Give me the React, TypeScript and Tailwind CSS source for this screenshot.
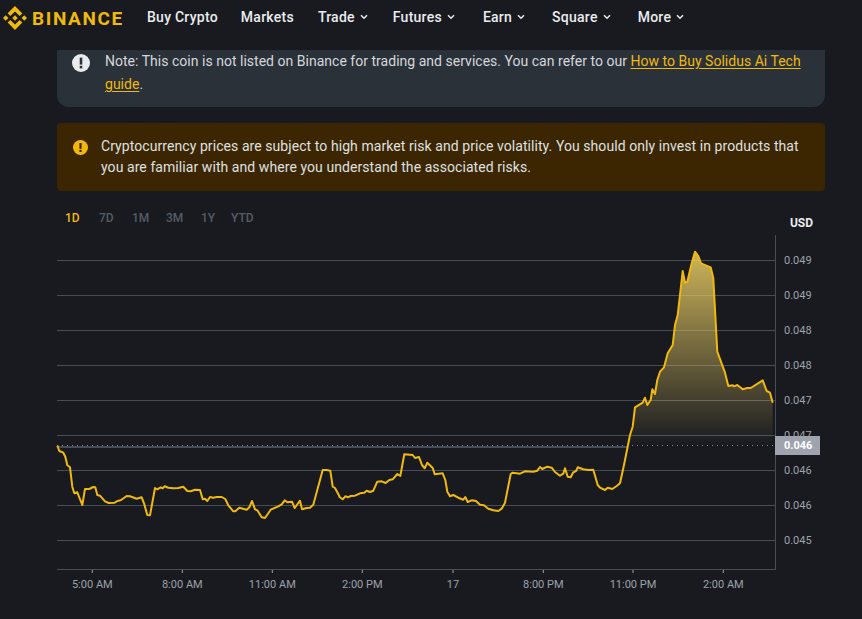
import React from "react";

// price line traced from the chart, kept per crop: [x, y] in 3x pixels with an offset
type Pt = [number, number];
const trace = (pts: Pt[], ox: number, oy: number): Pt[] => pts.map(([x, y]) => [ox + x / 3, oy + y / 3]);

const morning = trace(
  [[52,47],[58,63],[70,68],[76,80],[82,106],[90,112],[97,170],[103,190],[112,187],[127,225],[135,177],[148,177],[160,171],[166,172],[172,195],[180,197],[195,214],[206,219],[224,218],[232,213],[242,211],[260,198],[270,199],[290,206],[305,202],[312,220],[322,255],[330,256],[345,174],[352,178],[362,172],[368,175],[374,169],[385,173],[400,175],[415,174],[430,170],[442,183],[452,184],[465,179],[480,180],[488,208],[495,206],[502,213],[510,201],[520,203],[530,201],[545,201],[556,207],[565,226],[580,244],[586,244],[598,233],[620,239],[628,232],[636,213],[645,238],[652,241],[665,262],[675,264],[692,239],[715,229],[725,223],[734,211],[742,217],[756,215],[764,234],[780,212],[786,238],[800,234],[810,233],[820,224],[848,120],[860,120],[871,122],[878,170],[885,174],[898,198]],
  40, 430,
);
const afternoon = trace(
  [[58,200],[68,208],[76,199],[84,202],[92,198],[105,197],[120,190],[133,188],[140,182],[150,186],[160,182],[172,155],[185,154],[197,159],[208,150],[218,148],[232,132],[241,138],[253,73],[278,75],[285,84],[297,81],[306,105],[314,115],[322,98],[338,114],[344,133],[368,130],[376,150],[382,185],[390,199],[400,195],[415,203],[430,209],[436,201],[443,216],[455,211],[468,213],[480,224],[492,226],[505,236],[520,241],[535,243],[545,236],[555,218],[572,132],[578,128],[600,131],[615,124],[640,125],[652,122],[660,111],[667,117],[682,110],[695,113],[705,126],[720,137],[730,131],[735,115],[743,140],[752,142],[760,127],[768,123],[773,112],[790,118],[805,120],[820,119],[833,165],[840,173],[855,180],[863,173],[877,177],[890,168],[900,160]],
  320, 430,
);
const climb = trace([[72,195],[84,135],[90,105],[98,80],[105,22]], 600, 400);
const peak = trace(
  [[128,518],[135,503],[142,525],[152,510],[157,478],[165,492],[172,450],[180,425],[192,412],[203,370],[218,345],[225,285],[233,255],[248,123],[255,158],[262,155],[275,100],[285,65],[295,78],[303,100],[332,112],[340,145],[352,365],[375,428],[385,468],[398,466],[403,469],[412,465],[428,478],[442,474],[452,474],[488,451],[500,483],[510,488],[518,518]],
  600, 230,
);

const toPoints = (pts: Pt[]) => pts.map(([x, y]) => `${x.toFixed(1)},${y.toFixed(1)}`).join(" ");
const linePoints = toPoints([...morning, ...afternoon, ...climb, ...peak]);
const areaPoints = `628,446 ${toPoints([...climb.slice(1), ...peak])} 772.7,446`;

const gridLines = [260, 295, 330, 365, 400, 435, 470, 505, 540];
const priceLabels = ["0.049", "0.049", "0.048", "0.048", "0.047", "0.047", "0.046", "0.046", "0.045"];
const timeTicks = [
  { x: 92.3, label: "5:00 AM" },
  { x: 182.3, label: "8:00 AM" },
  { x: 272.3, label: "11:00 AM" },
  { x: 362.3, label: "2:00 PM" },
  { x: 453, label: "17" },
  { x: 543.3, label: "8:00 PM" },
  { x: 633, label: "11:00 PM" },
  { x: 723.3, label: "2:00 AM" },
];

const navItems = [
  { label: "Buy Crypto", menu: false, className: "mr-[23px]" },
  { label: "Markets", menu: false, className: "mr-[24px]" },
  { label: "Trade", menu: true, className: "mr-[25px]" },
  { label: "Futures", menu: true, className: "mr-[28px]" },
  { label: "Earn", menu: true, className: "mr-[27px]" },
  { label: "Square", menu: true, className: "mr-[27px]" },
  { label: "More", menu: true, className: "" },
];

const ranges = [
  { label: "1D", className: "w-[34px] text-[#f0b90b]" },
  { label: "7D", className: "w-[33px]" },
  { label: "1M", className: "w-[34px]" },
  { label: "3M", className: "w-[35px]" },
  { label: "1Y", className: "w-[30px]" },
  { label: "YTD", className: "w-[30px]" },
];

function BinanceMark() {
  return (
    <svg viewBox="0 0 126.61 126.61" className="h-[24px] w-[24px] shrink-0" fill="#f0b90b">
      <polygon points="38.73 53.2 63.31 28.62 87.9 53.21 102.2 38.91 63.31 0 24.43 38.9 38.73 53.2" />
      <rect x="4.19" y="53.1" width="20.22" height="20.22" transform="rotate(-45 14.3 63.21)" />
      <polygon points="38.73 73.41 63.31 98 87.9 73.4 102.21 87.69 63.31 126.6 24.42 87.7" />
      <rect x="102.2" y="53.2" width="20.22" height="20.22" transform="rotate(-45 112.31 63.31)" />
      <polygon points="77.83 63.3 63.31 48.78 52.59 59.5 51.35 60.73 48.8 63.28 63.31 77.83 77.83 63.31" />
    </svg>
  );
}

function Chevron() {
  return (
    <svg viewBox="0 0 8 6" className="ml-[5px] h-[6px] w-[8px]" fill="none" stroke="#eaecef" strokeWidth="1.5">
      <path d="M1 1.2l3 3 3-3" />
    </svg>
  );
}

function AlertIcon({ fill, mark, size }: { fill: string; mark: string; size: string }) {
  return (
    <svg viewBox="0 0 18 18" className={size}>
      <circle cx="9" cy="9" r="9" fill={fill} />
      <rect x="7.7" y="3.6" width="2.6" height="7" fill={mark} />
      <rect x="7.7" y="11.8" width="2.6" height="2.6" fill={mark} />
    </svg>
  );
}

function PriceChart() {
  return (
    <svg viewBox="0 231 862 388" className="block h-[388px] w-[862px]" fontFamily="Roboto, sans-serif">
      <defs>
        <linearGradient id="area" gradientUnits="userSpaceOnUse" x1="0" y1="250" x2="0" y2="446">
          <stop offset="0" stopColor="#f0d265" stopOpacity="0.85" />
          <stop offset="1" stopColor="#f0d265" stopOpacity="0" />
        </linearGradient>
      </defs>
      {gridLines.map((y) => (
        <line key={y} x1="57" x2="775" y1={y + 0.5} y2={y + 0.5} stroke="#474d57" />
      ))}
      <line x1="57" x2="628" y1="447" y2="447" stroke="#474d57" strokeWidth="2" />
      <line x1="57" x2="775" y1="445.5" y2="445.5" stroke="#848e9c" strokeDasharray="1 4" />
      <polygon points={areaPoints} fill="url(#area)" />
      <polyline points={linePoints} fill="none" stroke="#f0b90b" strokeWidth="2" strokeLinejoin="round" />
      <line x1="775.5" x2="775.5" y1="235" y2="570" stroke="#474d57" />
      <line x1="57" x2="775" y1="569.5" y2="569.5" stroke="#474d57" />
      {priceLabels.map((label, i) => (
        <text key={i} x="784" y={gridLines[i] + 3.5} fontSize="11" fill="#9ea2a9">
          {label}
        </text>
      ))}
      {timeTicks.map((tick) => (
        <g key={tick.label}>
          <line x1={tick.x} x2={tick.x} y1="570" y2="573" stroke="#9ea2a9" />
          <text x={tick.x} y="587.5" fontSize="11" fill="#9ea2a9" textAnchor="middle">
            {tick.label}
          </text>
        </g>
      ))}
      <rect x="775" y="436" width="45" height="19" fill="#9ea3ae" />
      <text x="784" y="449" fontSize="11" fontWeight="700" fill="#ffffff">
        0.046
      </text>
    </svg>
  );
}

export default function App() {
  return (
    <div className="min-h-[619px] w-[862px] overflow-hidden bg-[#181a20] font-['Roboto',sans-serif] text-[14px]">
      <header className="flex h-[50px] items-start pt-[6px] pl-[3px]">
        <div className="flex w-[144px] items-center">
          <BinanceMark />
          <span className="ml-[5px] text-[19px] leading-none font-bold tracking-[1.6px] text-[#f0b90b]">BINANCE</span>
        </div>
        <nav className="flex h-[22px] items-center">
          {navItems.map((item) => (
            <a
              key={item.label}
              className={`flex items-center font-medium tracking-[0.25px] text-[#eaecef] ${item.className}`}
            >
              {item.label}
              {item.menu && <Chevron />}
            </a>
          ))}
        </nav>
      </header>

      <div className="ml-[57px] flex h-[57px] w-[768px] gap-[15px] rounded-b-[12px] bg-[#2b3139] pl-[15px] text-[#d5d7db]">
        <div className="pt-[4px]">
          <AlertIcon fill="#eaecef" mark="#2b3139" size="h-[18px] w-[18px]" />
        </div>
        <p className="w-[700px] leading-[23px] tracking-[0.02px]">
          Note: This coin is not listed on Binance for trading and services. You can refer to our{" "}
          <a className="text-[#f0b90b] underline underline-offset-[2px]">How to Buy Solidus Ai Tech guide</a>.
        </p>
      </div>

      <div className="mt-[16px] ml-[57px] flex h-[68px] w-[768px] gap-[13px] rounded-[4px] bg-[#3c2601] pt-[13px] pl-[16px] text-[#dfe0e2]">
        <div className="pt-[4px]">
          <AlertIcon fill="#f0b90b" mark="#3c2601" size="h-[15px] w-[15px]" />
        </div>
        <p className="w-[705px] leading-[21px] tracking-[0.07px]">
          Cryptocurrency prices are subject to high market risk and price volatility. You should only invest in products
          that you are familiar with and where you understand the associated risks.
        </p>
      </div>

      <div className="mt-[17px] flex h-[23px] items-start justify-between pr-[49px] pl-[65px]">
        <div className="flex text-[12px] leading-[20px] font-medium text-[#565c66]">
          {ranges.map((range) => (
            <span key={range.label} className={range.className}>
              {range.label}
            </span>
          ))}
        </div>
        <span className="mt-[5px] text-[12px] leading-[20px] font-bold text-[#eaecef]">USD</span>
      </div>

      <PriceChart />
    </div>
  );
}
